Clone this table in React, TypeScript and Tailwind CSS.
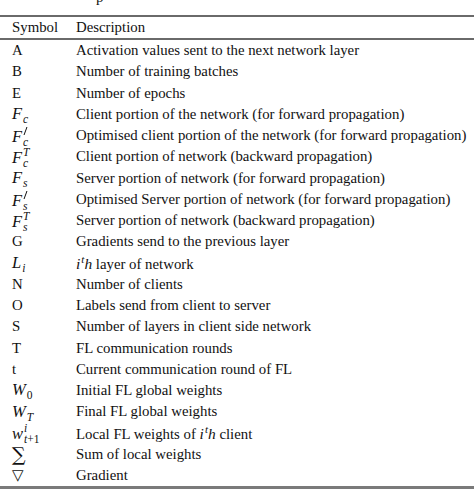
import React from "react";

const serif = { fontFamily: '"Liberation Serif", "Times New Roman", serif' };

function Sym({ base, sup, sub }: { base: string; sup?: React.ReactNode; sub?: React.ReactNode }) {
  return (
    <span className="inline-flex items-end leading-none">
      <span className="text-[16.5px] italic leading-[16px]">{base}</span>
      <span className="inline-flex flex-col text-[11.5px] italic leading-[11px] ml-[1px] mb-[-3px]">
        {sup !== undefined && <span className="h-[11px]">{sup}</span>}
        <span className="h-[11px]">{sub}</span>
      </span>
    </span>
  );
}

const prime = (
  <span className="inline-block w-[4px] h-[8px] mt-[1px] ml-[2px] border-l-[1.5px] border-[#111] skew-x-[-20deg]" />
);

const ith = (
  <>
    <span className="italic text-[15.5px]">i</span>
    <span className="italic text-[11px] align-[6px] ml-[1px]">t</span>
    <span className="italic text-[15.5px]">h</span>
  </>
);

type Row = { s: React.ReactNode; d: React.ReactNode };

const rows: Row[] = [
  { s: "A", d: "Activation values sent to the next network layer" },
  { s: "B", d: "Number of training batches" },
  { s: "E", d: "Number of epochs" },
  { s: <Sym base="F" sub="c" />, d: "Client portion of the network (for forward propagation)" },
  { s: <Sym base="F" sup={prime} sub="c" />, d: "Optimised client portion of the network (for forward propagation)" },
  { s: <Sym base="F" sup="T" sub="c" />, d: "Client portion of network (backward propagation)" },
  { s: <Sym base="F" sub="s" />, d: "Server portion of network (for forward propagation)" },
  { s: <Sym base="F" sup={prime} sub="s" />, d: "Optimised Server portion of network (for forward propagation)" },
  { s: <Sym base="F" sup="T" sub="s" />, d: "Server portion of network (backward propagation)" },
  { s: "G", d: "Gradients send to the previous layer" },
  { s: <Sym base="L" sub="i" />, d: <>{ith} layer of network</> },
  { s: "N", d: "Number of clients" },
  { s: "O", d: "Labels send from client to server" },
  { s: "S", d: "Number of layers in client side network" },
  { s: "T", d: "FL communication rounds" },
  { s: "t", d: "Current communication round of FL" },
  { s: <Sym base="W" sub={<span className="not-italic">0</span>} />, d: "Initial FL global weights" },
  { s: <Sym base="W" sub="T" />, d: "Final FL global weights" },
  {
    s: (
      <Sym
        base="w"
        sup="i"
        sub={
          <>
            t<span className="not-italic">+1</span>
          </>
        }
      />
    ),
    d: <>Local FL weights of {ith} client</>,
  },
  {
    s: (
      <span className="text-[19px] leading-none" style={{ fontFamily: '"DejaVu Serif", serif' }}>
        ∑
      </span>
    ),
    d: "Sum of local weights",
  },
  {
    s: (
      <span className="text-[15px] leading-none" style={{ fontFamily: '"DejaVu Sans", sans-serif' }}>
        ▽
      </span>
    ),
    d: "Gradient",
  },
];

export default function App() {
  return (
    <div className="w-[474px] h-[489px] bg-white text-[#111] overflow-hidden" style={serif}>
      <div className="h-[15px] overflow-hidden pl-[96px]">
        <div className="text-[15px] leading-[15px] mt-[-10px]">p</div>
      </div>
      <div className="h-[2px] bg-[#6a6a6a]" />
      <div className="h-[21px] flex items-center text-[14.8px] leading-none">
        <div className="w-[76px] pl-[12px]">Symbol</div>
        <div>Description</div>
      </div>
      <div className="h-[2px] bg-[#6a6a6a]" />
      <div className="h-[446px] flex flex-col">
        {rows.map((r, i) => (
          <div key={i} className="flex-1 min-h-0 flex items-center text-[14.8px] leading-none">
            <div className="w-[76px] pl-[12px] flex items-center">{r.s}</div>
            <div className="whitespace-nowrap">{r.d}</div>
          </div>
        ))}
      </div>
      <div className="h-[4px] bg-[#7a7a7a]" />
    </div>
  );
}
